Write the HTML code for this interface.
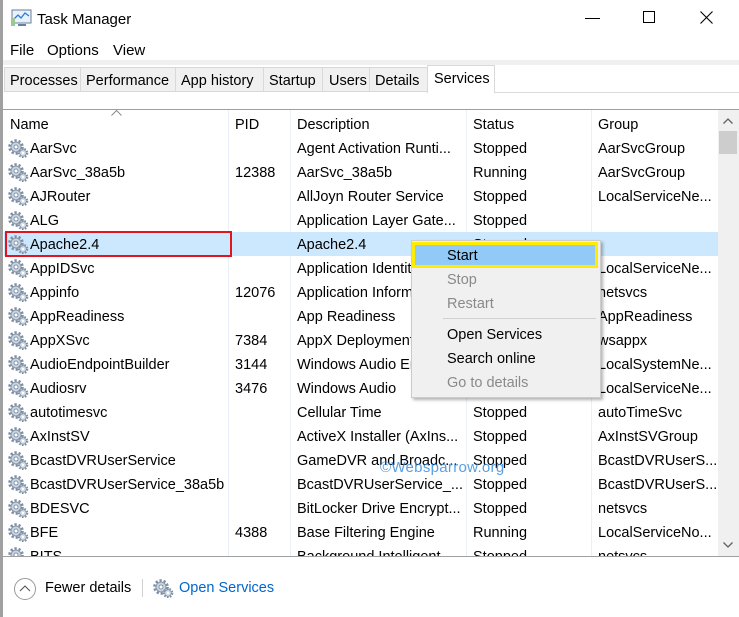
<!DOCTYPE html>
<html><head><meta charset="utf-8"><style>
*{margin:0;padding:0;box-sizing:border-box}
body{width:739px;height:617px;overflow:hidden;background:#fff;font-family:"Liberation Sans",sans-serif;font-size:14.5px;color:#000;position:relative}
.a{position:absolute;white-space:nowrap}
.row{position:absolute;left:4px;width:714px;height:24px}
.row span{position:absolute;top:5px;white-space:nowrap}
.g{position:absolute;left:4px;top:2px;width:22px;height:20px}
.vl{position:absolute;top:110px;height:446px;width:1px;background:#eaf0f7}
.mi{position:absolute;left:447px;white-space:nowrap}
.dis{color:#8a8a8a}
</style></head><body>
<svg width="0" height="0" style="position:absolute"><defs>
<g id="gear">
<circle cx="8" cy="9" r="6.3" fill="none" stroke="#7c8fa6" stroke-width="3" stroke-dasharray="2.2 1.8"/>
<circle cx="8" cy="9" r="5" fill="#c9d4e0" stroke="#8796a8" stroke-width="1"/>
<circle cx="8" cy="9" r="2" fill="#fff" stroke="#6d7f95" stroke-width="0.8"/>
<circle cx="15" cy="15" r="4.2" fill="none" stroke="#7c8fa6" stroke-width="2.2" stroke-dasharray="1.6 1.4"/>
<circle cx="15" cy="15" r="3.3" fill="#d5dde7" stroke="#8796a8" stroke-width="0.8"/>
<circle cx="15" cy="15" r="1.2" fill="#fff"/>
</g></defs></svg>

<div style="position:absolute;left:0;top:0;width:3px;height:617px;background:#a0a0a0"></div>
<svg class="a" style="left:11px;top:8px" width="22" height="20"><rect x="1" y="2" width="19" height="13" fill="#e8f2fb" stroke="#6a7f99"/><polyline points="3,11 7,7 10,10 14,5 18,8" fill="none" stroke="#2a7bd8" stroke-width="1.3"/><rect x="7" y="16" width="8" height="2" fill="#6a7f99"/><rect x="0" y="10" width="4" height="8" fill="#9bc79b"/></svg>
<div class="a" style="left:37px;top:11px;font-size:15px">Task Manager</div>
<div class="a" style="left:585px;top:18px;width:15px;height:1px;background:#000"></div>
<div class="a" style="left:643px;top:11px;width:12px;height:12px;border:1px solid #000"></div>
<svg class="a" style="left:700px;top:11px" width="13" height="13"><path d="M0.5 0.5L12.5 12.5M12.5 0.5L0.5 12.5" stroke="#000" stroke-width="1.1"/></svg>

<div class="a" style="left:10px;top:42px;font-size:15px">File</div>
<div class="a" style="left:47px;top:42px;font-size:15px">Options</div>
<div class="a" style="left:113px;top:42px;font-size:15px">View</div>

<div class="a" style="left:3px;top:60px;width:736px;height:5px;background:#f0f0f0"></div>
<div class="a" style="left:4px;top:67px;width:424px;height:25px;background:#f0f0f0;border:1px solid #d9d9d9"></div>
<div class="a" style="left:80px;top:67px;width:1px;height:25px;background:#d9d9d9"></div>
<div class="a" style="left:175px;top:67px;width:1px;height:25px;background:#d9d9d9"></div>
<div class="a" style="left:263px;top:67px;width:1px;height:25px;background:#d9d9d9"></div>
<div class="a" style="left:322px;top:67px;width:1px;height:25px;background:#d9d9d9"></div>
<div class="a" style="left:369px;top:67px;width:1px;height:25px;background:#d9d9d9"></div>
<div class="a" style="left:428px;top:92px;width:311px;height:1px;background:#d9d9d9"></div>
<div class="a" style="left:427px;top:65px;width:68px;height:28px;background:#fff;border:1px solid #d9d9d9;border-bottom:none"></div>
<div class="a" style="left:10px;top:73px">Processes</div>
<div class="a" style="left:86px;top:73px">Performance</div>
<div class="a" style="left:181px;top:73px">App history</div>
<div class="a" style="left:269px;top:73px">Startup</div>
<div class="a" style="left:329px;top:73px">Users</div>
<div class="a" style="left:375px;top:73px">Details</div>
<div class="a" style="left:434px;top:71px">Services</div>

<div class="a" style="left:3px;top:109px;width:736px;height:1px;background:#a0a0a0"></div>
<div class="vl" style="left:228px"></div>
<div class="vl" style="left:290px"></div>
<div class="vl" style="left:466px"></div>
<div class="vl" style="left:591px"></div>
<svg class="a" style="left:111px;top:110px" width="11" height="6"><path d="M0.5 5.5L5.5 0.5L10.5 5.5" fill="none" stroke="#888"/></svg>
<div class="a" style="left:10px;top:117px">Name</div>
<div class="a" style="left:235px;top:117px">PID</div>
<div class="a" style="left:297px;top:117px">Description</div>
<div class="a" style="left:473px;top:117px">Status</div>
<div class="a" style="left:598px;top:117px">Group</div>

<div class="a" style="left:718px;top:110px;width:21px;height:446px;background:#f0f0f0"></div>
<svg class="a" style="left:723px;top:118px" width="10" height="6"><path d="M0.5 5.5L5 1L9.5 5.5" fill="none" stroke="#606060" stroke-width="1.3"/></svg>
<div class="a" style="left:719px;top:131px;width:18px;height:23px;background:#cdcdcd"></div>
<svg class="a" style="left:723px;top:542px" width="10" height="6"><path d="M0.5 0.5L5 5L9.5 0.5" fill="none" stroke="#606060" stroke-width="1.3"/></svg>

<div class="row" style="top:232px;background:#cce8ff"></div>

<div class="row" style="top:136px"><svg class="g"><use href="#gear"/></svg><span style="left:26px">AarSvc</span><span style="left:293px">Agent Activation Runti...</span><span style="left:469px">Stopped</span><span style="left:594px">AarSvcGroup</span></div>
<div class="row" style="top:160px"><svg class="g"><use href="#gear"/></svg><span style="left:26px">AarSvc_38a5b</span><span style="left:231px">12388</span><span style="left:293px">AarSvc_38a5b</span><span style="left:469px">Running</span><span style="left:594px">AarSvcGroup</span></div>
<div class="row" style="top:184px"><svg class="g"><use href="#gear"/></svg><span style="left:26px">AJRouter</span><span style="left:293px">AllJoyn Router Service</span><span style="left:469px">Stopped</span><span style="left:594px">LocalServiceNe...</span></div>
<div class="row" style="top:208px"><svg class="g"><use href="#gear"/></svg><span style="left:26px">ALG</span><span style="left:293px">Application Layer Gate...</span><span style="left:469px">Stopped</span></div>
<div class="row" style="top:232px"><svg class="g"><use href="#gear"/></svg><span style="left:26px">Apache2.4</span><span style="left:293px">Apache2.4</span><span style="left:469px">Stopped</span></div>
<div class="row" style="top:256px"><svg class="g"><use href="#gear"/></svg><span style="left:26px">AppIDSvc</span><span style="left:293px">Application Identity</span><span style="left:594px">LocalServiceNe...</span></div>
<div class="row" style="top:280px"><svg class="g"><use href="#gear"/></svg><span style="left:26px">Appinfo</span><span style="left:231px">12076</span><span style="left:293px">Application Information</span><span style="left:594px">netsvcs</span></div>
<div class="row" style="top:304px"><svg class="g"><use href="#gear"/></svg><span style="left:26px">AppReadiness</span><span style="left:293px">App Readiness</span><span style="left:594px">AppReadiness</span></div>
<div class="row" style="top:328px"><svg class="g"><use href="#gear"/></svg><span style="left:26px">AppXSvc</span><span style="left:231px">7384</span><span style="left:293px">AppX Deployment</span><span style="left:594px">wsappx</span></div>
<div class="row" style="top:352px"><svg class="g"><use href="#gear"/></svg><span style="left:26px">AudioEndpointBuilder</span><span style="left:231px">3144</span><span style="left:293px">Windows Audio Endpoint</span><span style="left:594px">LocalSystemNe...</span></div>
<div class="row" style="top:376px"><svg class="g"><use href="#gear"/></svg><span style="left:26px">Audiosrv</span><span style="left:231px">3476</span><span style="left:293px">Windows Audio</span><span style="left:594px">LocalServiceNe...</span></div>
<div class="row" style="top:400px"><svg class="g"><use href="#gear"/></svg><span style="left:26px">autotimesvc</span><span style="left:293px">Cellular Time</span><span style="left:469px">Stopped</span><span style="left:594px">autoTimeSvc</span></div>
<div class="row" style="top:424px"><svg class="g"><use href="#gear"/></svg><span style="left:26px">AxInstSV</span><span style="left:293px">ActiveX Installer (AxIns...</span><span style="left:469px">Stopped</span><span style="left:594px">AxInstSVGroup</span></div>
<div class="row" style="top:448px"><svg class="g"><use href="#gear"/></svg><span style="left:26px">BcastDVRUserService</span><span style="left:293px">GameDVR and Broadc...</span><span style="left:469px">Stopped</span><span style="left:594px">BcastDVRUserS...</span></div>
<div class="row" style="top:472px"><svg class="g"><use href="#gear"/></svg><span style="left:26px">BcastDVRUserService_38a5b</span><span style="left:293px">BcastDVRUserService_...</span><span style="left:469px">Stopped</span><span style="left:594px">BcastDVRUserS...</span></div>
<div class="row" style="top:496px"><svg class="g"><use href="#gear"/></svg><span style="left:26px">BDESVC</span><span style="left:293px">BitLocker Drive Encrypt...</span><span style="left:469px">Stopped</span><span style="left:594px">netsvcs</span></div>
<div class="row" style="top:520px"><svg class="g"><use href="#gear"/></svg><span style="left:26px">BFE</span><span style="left:231px">4388</span><span style="left:293px">Base Filtering Engine</span><span style="left:469px">Running</span><span style="left:594px">LocalServiceNo...</span></div>
<div style="position:absolute;left:0;top:544px;width:718px;height:12px;overflow:hidden">
<div class="row" style="top:0"><svg class="g"><use href="#gear"/></svg><span style="left:26px">BITS</span><span style="left:293px">Background Intelligent...</span><span style="left:469px">Stopped</span><span style="left:594px">netsvcs</span></div>
</div>

<div class="a" style="left:5px;top:231px;width:227px;height:26px;border:2px solid #e0151f"></div>

<div class="a" style="left:380px;top:459px;color:#3d8fe0;font-size:15px;letter-spacing:0.3px;opacity:0.85">©Websparrow.org</div>

<div class="a" style="left:411px;top:240px;width:190px;height:158px;background:#f0f0f0;border:1px solid #ccc;box-shadow:2px 2px 3px rgba(0,0,0,0.3)"></div>
<div class="a" style="left:412px;top:242px;width:186px;height:26px;background:#91c9f7;border:3px solid #ffec00"></div>
<div class="mi" style="top:248px">Start</div>
<div class="mi dis" style="top:272px">Stop</div>
<div class="mi dis" style="top:296px">Restart</div>
<div class="a" style="left:443px;top:318px;width:153px;height:1px;background:#d0d0d0"></div>
<div class="mi" style="top:327px">Open Services</div>
<div class="mi" style="top:351px">Search online</div>
<div class="mi dis" style="top:375px">Go to details</div>

<div class="a" style="left:3px;top:556px;width:736px;height:1px;background:#a0a0a0"></div>
<svg class="a" style="left:13px;top:577px" width="24" height="24"><circle cx="12" cy="12" r="10.5" fill="none" stroke="#9a9a9a"/><path d="M7 14L12 9L17 14" fill="none" stroke="#555" stroke-width="1.1"/></svg>
<div class="a" style="left:45px;top:580px">Fewer details</div>
<div class="a" style="left:142px;top:579px;width:1px;height:18px;background:#d0d0d0"></div>
<svg class="a" style="left:153px;top:578px" width="22" height="20"><use href="#gear"/></svg>
<div class="a" style="left:179px;top:580px;color:#0066cc">Open Services</div>
</body></html>
